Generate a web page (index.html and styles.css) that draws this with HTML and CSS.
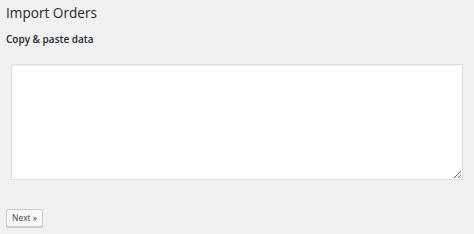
FILE: index.html
```html
<!DOCTYPE html>
<html>
<head>
<meta charset="utf-8">
<link rel="stylesheet" href="styles.css">
</head>
<body>
<div class="wrap">
  <h1 class="title">Import Orders</h1>
  <h3 class="section">Copy &amp; paste data</h3>
  <div class="box">
    <textarea class="data"></textarea>
  </div>
  <div class="actions">
    <button class="btn">Next &raquo;</button>
  </div>
</div>
</body>
</html>
```

FILE: styles.css
```css
html, body {
  margin: 0;
  padding: 0;
  background: #f1f1f1;
}
body {
  font-family: "Open Sans", "Liberation Sans", sans-serif;
  color: #23282d;
  width: 474px;
  height: 234px;
  overflow: hidden;
}
.wrap {
  padding: 5px 6px 0 6px;
}
.title {
  margin: 0;
  font-size: 13.6px;
  font-weight: 400;
  line-height: 16px;
  color: #23282d;
}
.section {
  margin: 12px 0 0 0;
  font-size: 10px;
  font-weight: 600;
  line-height: 12px;
  color: #23282d;
}
.box {
  margin-top: 19px;
  padding-left: 5px;
}
.data {
  display: block;
  box-sizing: border-box;
  width: 452px;
  height: 116px;
  margin: 0;
  border: 1px solid #dcdcdc;
  box-shadow: inset 0 1px 2px rgba(0,0,0,0.07);
  background: #fff;
  resize: vertical;
}
.actions {
  margin-top: 29px;
}
.btn {
  display: block;
  box-sizing: border-box;
  height: 18px;
  padding: 0 5px;
  font-family: "Open Sans", "Liberation Sans", sans-serif;
  font-size: 8.5px;
  line-height: 16px;
  color: #444;
  background: #f7f7f7;
  border: 1px solid #ccc;
  border-radius: 2px;
  box-shadow: 0 1px 0 #ccc;
}
```
